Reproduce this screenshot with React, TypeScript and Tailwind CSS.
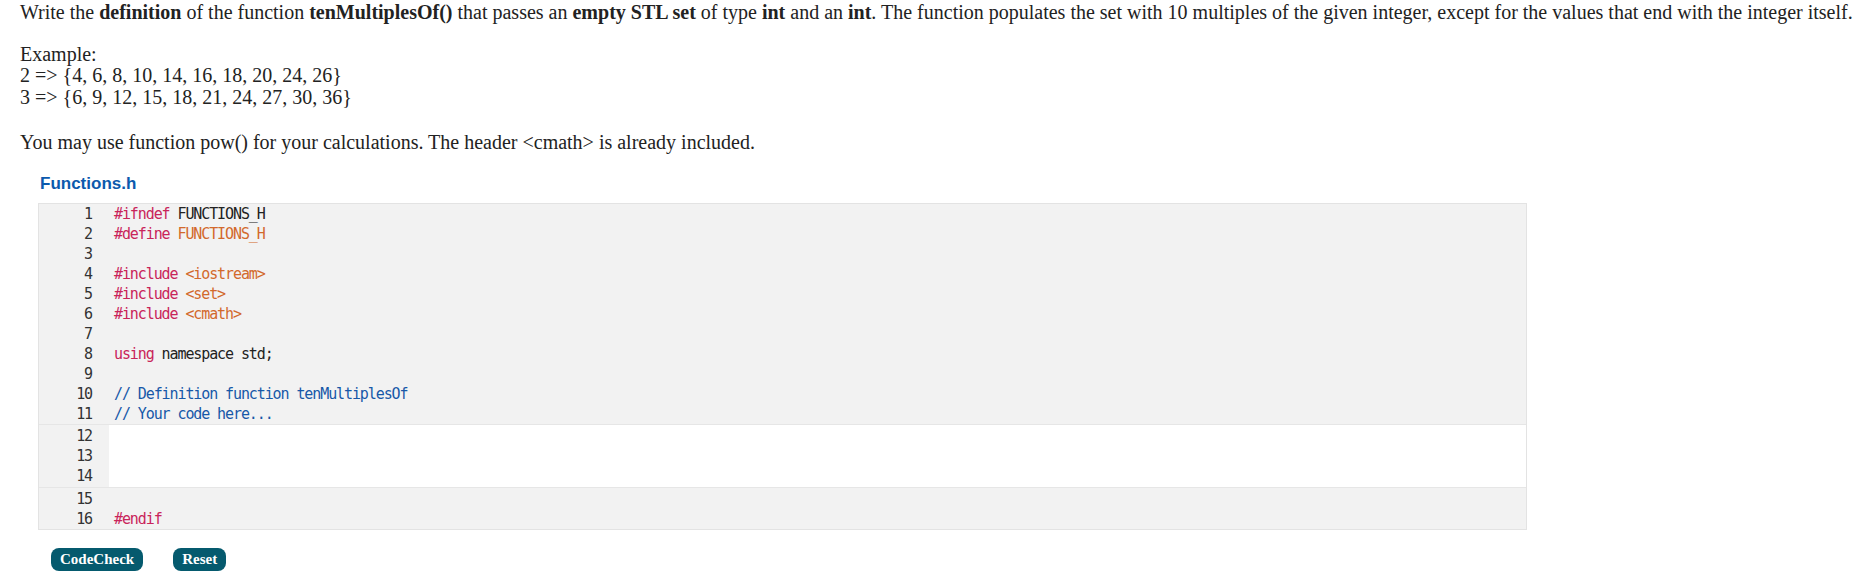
import { FC } from 'react';

type Tok = { t: string; c?: string };

const KW = 'text-[#c9245a]';
const STR = 'text-[#d2692c]';
const CMT = 'text-[#1758a8]';

const top: Tok[][] = [
    [{ t: '#ifndef', c: KW }, { t: ' FUNCTIONS_H' }],
    [{ t: '#define', c: KW }, { t: ' ' }, { t: 'FUNCTIONS_H', c: STR }],
    [],
    [{ t: '#include', c: KW }, { t: ' ' }, { t: '<iostream>', c: STR }],
    [{ t: '#include', c: KW }, { t: ' ' }, { t: '<set>', c: STR }],
    [{ t: '#include', c: KW }, { t: ' ' }, { t: '<cmath>', c: STR }],
    [],
    [{ t: 'using', c: KW }, { t: ' namespace std;' }],
    [],
    [{ t: '// Definition function tenMultiplesOf', c: CMT }],
    [{ t: '// Your code here...', c: CMT }],
];

const bottom: Tok[][] = [[], [{ t: '#endif', c: KW }]];

const Line: FC<{ n: number; toks: Tok[] }> = ({ n, toks }) => (
    <div className="flex h-[20px] leading-[20px]">
        <div className="w-[53px] text-right text-[#333]">{n}</div>
        <div className="pl-[22px] whitespace-pre text-[#222]">
            {toks.map((k, i) => (
                <span key={i} className={k.c}>{k.t}</span>
            ))}
        </div>
    </div>
);

const App: FC = () => {
    return (
        <div className="bg-white min-h-[588px] pl-[20px] pt-[2px] text-[#222]">
            <div className="font-['Liberation_Serif',serif] text-[20px] leading-[21.5px]">
                <p className="whitespace-nowrap">
                    Write the <b>definition</b> of the function <b>tenMultiplesOf()</b> that passes an <b>empty STL set</b> of type <b>int</b> and an <b>int</b>. The function populates the set with 10 multiples of the given integer, except for the values that end with the integer itself.
                </p>
                <p className="mt-[20px]">
                    Example:<br />
                    2 =&gt; {'{'}4, 6, 8, 10, 14, 16, 18, 20, 24, 26{'}'}<br />
                    3 =&gt; {'{'}6, 9, 12, 15, 18, 21, 24, 27, 30, 36{'}'}
                </p>
                <p className="mt-[24px]">
                    You may use function pow() for your calculations. The header &lt;cmath&gt; is already included.
                </p>
            </div>

            <div className="ml-[20px] mt-[20px] h-[20px] leading-[20px] font-['Liberation_Sans',sans-serif] font-bold text-[17px] text-[#0b5aad]">
                Functions.h
            </div>

            <div className="ml-[18px] mt-[9px] w-[1489px] border border-[#e3e3e3] bg-[#f2f2f2] font-['DejaVu_Sans_Mono',monospace] text-[15px] tracking-[-1.1px]">
                {top.map((l, i) => (
                    <Line key={i} n={i + 1} toks={l} />
                ))}
                <div className="flex border-y border-[#e6e6e6]">
                    <div className="w-[70px] shrink-0 py-[1px]">
                        {[12, 13, 14].map(n => (
                            <div key={n} className="h-[20px] leading-[20px] w-[53px] text-right text-[#333]">{n}</div>
                        ))}
                    </div>
                    <div className="flex-1 bg-white" />
                </div>
                <div className="pt-[1px]">
                    {bottom.map((l, i) => (
                        <Line key={i} n={i + 15} toks={l} />
                    ))}
                </div>
            </div>

            <div className="ml-[31px] mt-[18px] flex gap-[30px] font-['Liberation_Serif',serif] font-bold text-[15px] text-white">
                <button className="h-[23px] px-[9px] rounded-[8px] bg-[#055a6e] leading-[23px]">CodeCheck</button>
                <button className="h-[23px] px-[9px] rounded-[8px] bg-[#055a6e] leading-[23px]">Reset</button>
            </div>
        </div>
    );
};

export default App;
